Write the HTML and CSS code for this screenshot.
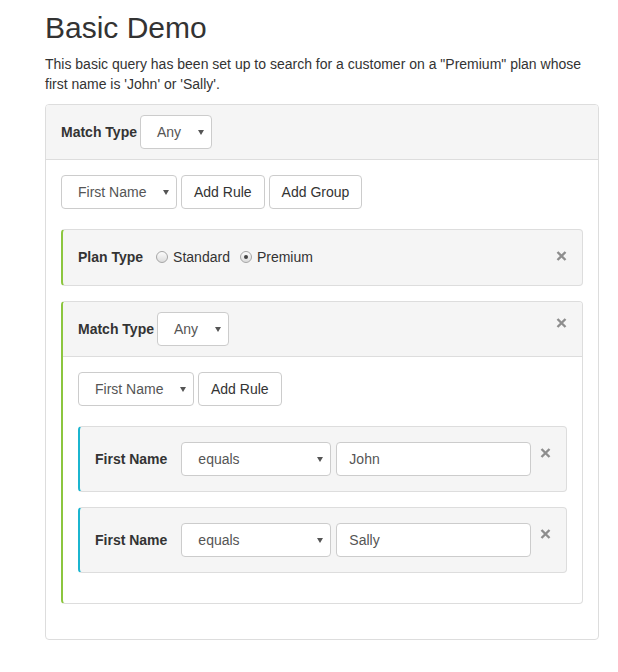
FILE: index.html
```html
<!DOCTYPE html>
<html lang="en">
<head>
<meta charset="utf-8">
<title>Basic Demo</title>
<link rel="stylesheet" href="styles.css">
</head>
<body>
<div class="page">
  <h2 class="title">Basic Demo</h2>
  <p class="intro">This basic query has been set up to search for a customer on a "Premium" plan whose first name is 'John' or 'Sally'.</p>

  <div class="group">
    <div class="group-head">
      <span class="lbl">Match Type</span>
      <div class="sel sel-any"><span>Any</span><span class="caret"></span></div>
    </div>
    <div class="group-body">
      <div class="toolbar">
        <div class="sel sel-field"><span>First Name</span><span class="caret"></span></div>
        <button class="btn">Add Rule</button>
        <button class="btn">Add Group</button>
      </div>

      <div class="rule rule-green">
        <div class="rule-main plan">
          <span class="lbl plan-lbl">Plan Type</span>
          <label class="radio"><span class="radio-dot"></span>Standard</label>
          <label class="radio"><span class="radio-dot checked"></span>Premium</label>
        </div>
        <span class="close"><svg width="11" height="10" viewBox="0 0 11 10"><path d="M1.5 1 L9.5 9 M9.5 1 L1.5 9" stroke="#8e8e8e" stroke-width="2.4" stroke-linecap="butt"/></svg></span>
      </div>

      <div class="group group-nested">
        <div class="group-head">
          <span class="lbl">Match Type</span>
          <div class="sel sel-any"><span>Any</span><span class="caret"></span></div>
          <span class="close"><svg width="11" height="10" viewBox="0 0 11 10"><path d="M1.5 1 L9.5 9 M9.5 1 L1.5 9" stroke="#8e8e8e" stroke-width="2.4" stroke-linecap="butt"/></svg></span>
        </div>
        <div class="group-body">
          <div class="toolbar">
            <div class="sel sel-field"><span>First Name</span><span class="caret"></span></div>
            <button class="btn">Add Rule</button>
          </div>

          <div class="rule rule-blue">
            <div class="rule-main">
              <span class="lbl field-lbl">First Name</span>
              <div class="sel sel-op"><span>equals</span><span class="caret"></span></div>
              <div class="input">John</div>
            </div>
            <span class="close"><svg width="11" height="10" viewBox="0 0 11 10"><path d="M1.5 1 L9.5 9 M9.5 1 L1.5 9" stroke="#8e8e8e" stroke-width="2.4" stroke-linecap="butt"/></svg></span>
          </div>

          <div class="rule rule-blue">
            <div class="rule-main">
              <span class="lbl field-lbl">First Name</span>
              <div class="sel sel-op"><span>equals</span><span class="caret"></span></div>
              <div class="input">Sally</div>
            </div>
            <span class="close"><svg width="11" height="10" viewBox="0 0 11 10"><path d="M1.5 1 L9.5 9 M9.5 1 L1.5 9" stroke="#8e8e8e" stroke-width="2.4" stroke-linecap="butt"/></svg></span>
          </div>
        </div>
      </div>
    </div>
  </div>
</div>
</body>
</html>
```

FILE: styles.css
```css
* { box-sizing: border-box; }

body {
  margin: 0;
  font-family: "Liberation Sans", Arial, sans-serif;
  font-size: 14px;
  line-height: 20px;
  color: #333;
  background: #fff;
}

.page {
  width: 554px;
  margin-left: 45px;
}

.title {
  margin: 11px 0 10px;
  font-size: 30px;
  line-height: 33px;
  font-weight: normal;
  color: #333;
}

.intro {
  margin: 0 0 10px;
}

.group {
  border: 1px solid #ddd;
  border-radius: 4px;
  background: #fff;
}

.group-nested {
  border-left: 2px solid #8cc63f;
  margin-bottom: 20px;
}

.group-head {
  display: flex;
  align-items: center;
  padding: 10px 15px;
  background: #f5f5f5;
  border-bottom: 1px solid #ddd;
  border-radius: 3px 3px 0 0;
}

.group-body {
  padding: 15px;
}

.lbl {
  font-weight: bold;
  margin-right: 3px;
}

.toolbar {
  display: flex;
  gap: 4px;
  margin-bottom: 20px;
}

.sel {
  display: flex;
  align-items: center;
  justify-content: space-between;
  height: 34px;
  padding: 0 6px 0 16px;
  border: 1px solid #ccc;
  border-radius: 4px;
  background: #fff;
  color: #555;
}

.sel-any { width: 72px; }
.sel-field { width: 116px; }
.sel-op { width: 150px; }

.caret {
  width: 0;
  height: 0;
  border-left: 3px solid transparent;
  border-right: 3px solid transparent;
  border-top: 5px solid #555;
  margin-right: 1px;
}

.btn {
  height: 34px;
  padding: 0 12px;
  border: 1px solid #ccc;
  border-radius: 4px;
  background: #fff;
  color: #333;
  font-family: inherit;
  font-size: 14px;
  line-height: 20px;
}

.rule {
  display: flex;
  align-items: flex-start;
  padding: 15px;
  margin-bottom: 15px;
  border: 1px solid #ddd;
  border-radius: 4px;
  background: #f5f5f5;
}

.rule-green { border-left: 2px solid #8cc63f; }
.rule-blue { border-left: 2px solid #1bb5cf; }

.rule-main {
  display: flex;
  align-items: center;
}

.plan {
  height: 25px;
  padding-top: 2px;
  align-items: flex-start;
}

.plan-lbl { margin-right: 13px; }

.radio {
  display: flex;
  align-items: center;
  height: 20px;
  margin-right: 10px;
}

.radio-dot {
  width: 12px;
  height: 12px;
  margin-right: 5px;
  border: 1px solid #a6a6a6;
  border-radius: 50%;
  background: linear-gradient(#fcfcfc, #dcdcdc);
  display: flex;
  align-items: center;
  justify-content: center;
}

.radio-dot.checked::after {
  content: "";
  width: 4px;
  height: 4px;
  border-radius: 50%;
  background: #444;
}

.field-lbl { margin-right: 14px; }

.sel-op { margin-right: 5px; }

.input {
  display: flex;
  align-items: center;
  width: 195px;
  height: 34px;
  padding: 0 12px;
  border: 1px solid #ccc;
  border-radius: 4px;
  background: #fff;
  color: #555;
}

.close {
  margin-left: auto;
  height: 21px;
  width: 11px;
  display: flex;
  align-items: center;
  justify-content: center;
  align-self: flex-start;
}
```
